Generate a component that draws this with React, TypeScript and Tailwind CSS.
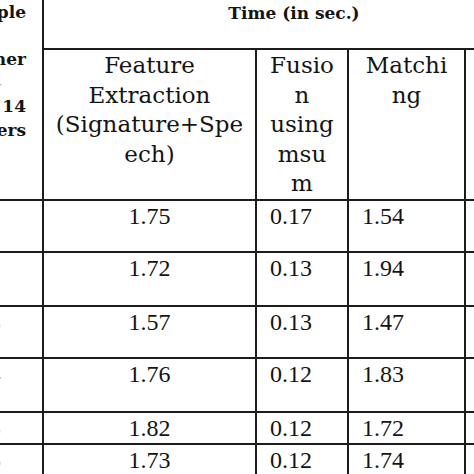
import React from "react";

const rows = [
  { fe: "1.75", fu: "0.17", ma: "1.54", to: "3.46", left: "1" },
  { fe: "1.72", fu: "0.13", ma: "1.94", to: "3.79", left: "2" },
  { fe: "1.57", fu: "0.13", ma: "1.47", to: "3.17", left: "3" },
  { fe: "1.76", fu: "0.12", ma: "1.83", to: "3.71", left: "4" },
  { fe: "1.82", fu: "0.12", ma: "1.72", to: "3.66", left: "5" },
  { fe: "1.73", fu: "0.12", ma: "1.74", to: "3.59", left: "6" },
];

const cell = "box-border border-r-2 border-b-2 border-[#1c1c1c] overflow-hidden";
const head = "font-['DejaVu_Serif',serif]";
const num = "font-['Liberation_Serif','Times_New_Roman',serif] text-[24px] leading-none pt-[3px]";

export default function App() {
  return (
    <div className="w-[474px] h-[474px] overflow-hidden bg-white text-[#141414]">
      <div className="ml-[-67px] grid grid-cols-[111px_213px_92px_117px_80px] grid-rows-[50px_151px_52px_54px_52px_54px_32px_52px]">
        <div className={`${cell} ${head} row-span-2 text-right pr-[16px] pt-[1px] text-[17px] leading-[23.6px] font-bold`}>
          <div>Sample</div>
          <div>&nbsp;</div>
          <div>Learner</div>
          <div className="pr-[24px] font-normal text-[#aaa]">-</div>
          <div>of 14</div>
          <div>users</div>
        </div>
        <div className={`${cell} ${head} col-span-4 text-center pt-[1px] text-[17px] leading-[24px] font-bold`}>
          Time (in sec.)
        </div>
        <div className={`${cell} ${head} text-center pt-[1px] text-[23px] leading-[29.5px]`}>
          <div>Feature</div>
          <div>Extraction</div>
          <div className="whitespace-nowrap">(Signature+Spe</div>
          <div>ech)</div>
        </div>
        <div className={`${cell} ${head} text-center pt-[1px] text-[23px] leading-[29.5px]`}>
          <div>Fusio</div>
          <div>n</div>
          <div>using</div>
          <div>msu</div>
          <div>m</div>
        </div>
        <div className={`${cell} ${head} text-center pt-[1px] text-[23px] leading-[29.5px]`}>
          <div>Matchi</div>
          <div>ng</div>
        </div>
        <div className={`${cell} ${head} text-center pt-[1px] text-[23px] leading-[29.5px]`}>
          <div>Total</div>
        </div>
        {rows.map((r, i) => (
          <React.Fragment key={i}>
            <div className={`${cell} ${num} text-right pr-[41px] text-[#aaa]`}>{r.left}</div>
            <div className={`${cell} ${num} text-center`}>{r.fe}</div>
            <div className={`${cell} ${num} pl-[13px]`}>{r.fu}</div>
            <div className={`${cell} ${num} pl-[13px]`}>{r.ma}</div>
            <div className={`${cell} ${num} pl-[13px]`}>{r.to}</div>
          </React.Fragment>
        ))}
      </div>
    </div>
  );
}
